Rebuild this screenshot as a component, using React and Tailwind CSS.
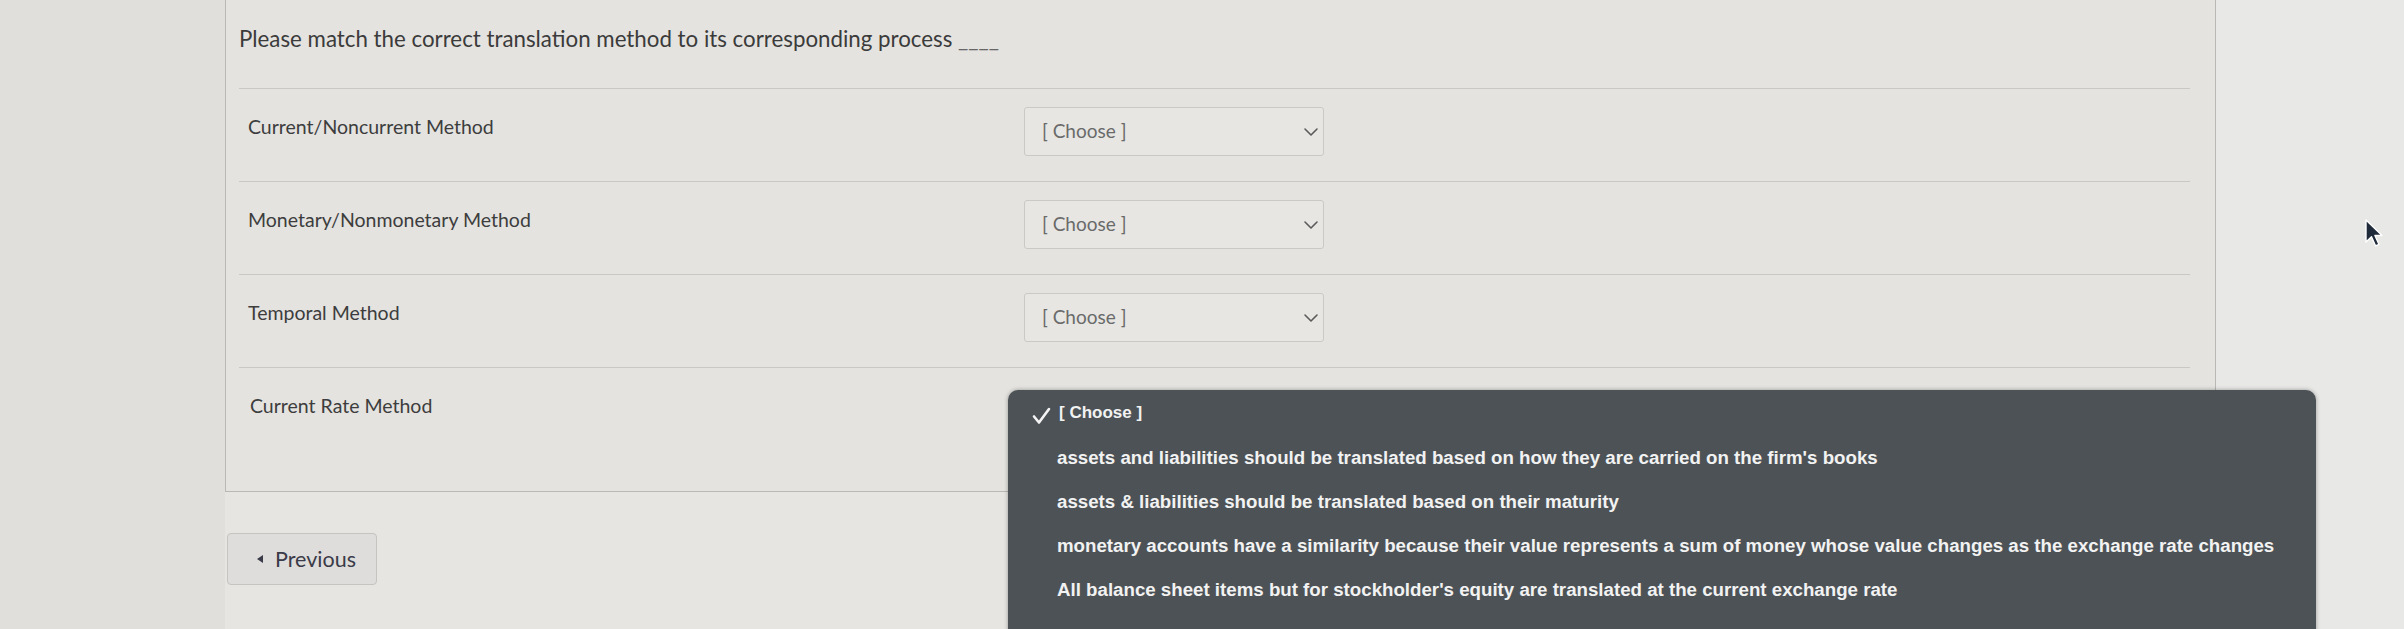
import React from "react";

const rows = [
  "Current/Noncurrent Method",
  "Monetary/Nonmonetary Method",
  "Temporal Method",
];

const options = [
  "assets and liabilities should be translated based on how they are carried on the firm's books",
  "assets & liabilities should be translated based on their maturity",
  "monetary accounts have a similarity because their value represents a sum of money whose value changes as the exchange rate changes",
  "All balance sheet items but for stockholder's equity are translated at the current exchange rate",
];

function Chevron() {
  return (
    <svg width="16" height="10" viewBox="0 0 16 10" fill="none">
      <path d="M2 2l6 6 6-6" stroke="#5a5a5a" strokeWidth="1.6" strokeLinecap="round" strokeLinejoin="round" />
    </svg>
  );
}

function Select() {
  return (
    <div className="w-[300px] h-[49px] border border-[#cac9c6] rounded-[3px] bg-[#e7e6e3] flex items-center justify-between pl-[17px] pr-[4px]">
      <span className="text-[19px] text-[#6a6a6a]">[ Choose ]</span>
      <Chevron />
    </div>
  );
}

function Dropdown() {
  return (
    <div className="absolute left-[-16px] top-[4px] w-[1308px] h-[260px] rounded-[10px] bg-[#4d5257] shadow-[0_0_4px_rgba(0,0,0,0.35)] pt-[9px] font-['Liberation_Sans',Arial,sans-serif] font-bold text-[18.7px] text-[#f2f2f2] z-10">
      <div className="flex items-center h-[28px] text-[17px]">
        <svg className="ml-[24px] mr-[8px] mt-[6px]" width="19" height="18" viewBox="0 0 19 18" fill="none">
          <path d="M2 9.5l5 6L17 2" stroke="#f4f4f4" strokeWidth="2.6" strokeLinecap="round" strokeLinejoin="round" />
        </svg>
        <span>[ Choose ]</span>
      </div>
      <div className="flex flex-col pl-[49px] pt-[17px] gap-[16px]">
        {options.map((o) => (
          <div key={o} className="h-[28px] flex items-center">{o}</div>
        ))}
      </div>
    </div>
  );
}

function Cursor() {
  return (
    <svg className="absolute left-[2364px] top-[218px]" width="20" height="30" viewBox="0 0 20 30">
      <path d="M2 2v22l5.5-5.2 4 9 3.4-1.5-4-8.8H18z" fill="#1f2a3a" stroke="#ffffff" strokeWidth="1.4" strokeLinejoin="round" />
    </svg>
  );
}

export default function App() {
  return (
    <div className="relative w-[2404px] h-[629px] overflow-hidden bg-[#e6e5e2] font-['Lato','Open_Sans',sans-serif]">
      <div className="flex h-full">
        <div className="w-[225px] bg-[#e0dfdc] h-full" />
        <div className="flex flex-col">
          <div className="w-[1991px] h-[492px] border-l border-r border-b border-[#b9b8b5] bg-[#e4e3e0] pl-[13px] pr-[25px]">
            <p className="pt-[25px] h-[88px] text-[22.3px] leading-[28px] text-[#3b3b3b]">
              Please match the correct translation method to its corresponding process <span className="text-[#666]">____</span>
            </p>
            {rows.map((r) => (
              <div key={r} className="h-[93px] border-t border-[#c9c8c5] flex items-start pt-[18px]">
                <div className="w-[785px] pl-[9px] mt-[8px] text-[19.5px] leading-[24px] text-[#3d3d3d]">{r}</div>
                <Select />
              </div>
            ))}
            <div className="h-[123px] border-t border-[#c9c8c5] flex items-start pt-[18px]">
              <div className="w-[785px] pl-[11px] mt-[8px] text-[19.5px] leading-[24px] text-[#3d3d3d]">Current Rate Method</div>
              <div className="relative w-[300px] h-[49px]">
                <Dropdown />
              </div>
            </div>
          </div>
          <div className="pt-[41px] pl-[2px]">
            <button className="w-[150px] h-[52px] border border-[#c5c4c1] rounded-[4px] bg-[#dedddb] flex items-center pl-[29px] gap-[12px] text-[21.5px] text-[#3a3a48]">
              <span className="w-0 h-0 border-y-[4px] border-y-transparent border-r-[6px] border-r-[#3a3a48]" />
              Previous
            </button>
          </div>
        </div>
        <div className="flex-1 bg-[#e8e8e6]" />
      </div>
      <Cursor />
    </div>
  );
}
